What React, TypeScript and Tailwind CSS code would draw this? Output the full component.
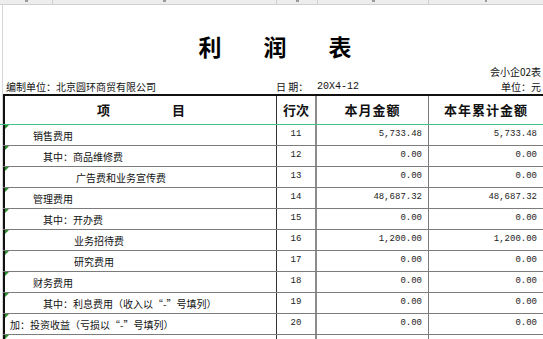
const cjk = "font-['Noto_Sans_CJK_SC',sans-serif]";
const mono = "font-['Liberation_Mono','Noto_Sans_CJK_SC',monospace]";

type Row = { name: string; indent: string; no: string; month: string; year: string };

const rows: Row[] = [
  { name: "销售费用", indent: "pl-[28px]", no: "11", month: "5,733.48", year: "5,733.48" },
  { name: "其中：商品维修费", indent: "pl-[38px]", no: "12", month: "0.00", year: "0.00" },
  { name: "广告费和业务宣传费", indent: "pl-[71px]", no: "13", month: "0.00", year: "0.00" },
  { name: "管理费用", indent: "pl-[28px]", no: "14", month: "48,687.32", year: "48,687.32" },
  { name: "其中：开办费", indent: "pl-[38px]", no: "15", month: "0.00", year: "0.00" },
  { name: "业务招待费", indent: "pl-[69px]", no: "16", month: "1,200.00", year: "1,200.00" },
  { name: "研究费用", indent: "pl-[69px]", no: "17", month: "0.00", year: "0.00" },
  { name: "财务费用", indent: "pl-[28px]", no: "18", month: "0.00", year: "0.00" },
  { name: "其中：利息费用（收入以“-”号填列）", indent: "pl-[38px]", no: "19", month: "0.00", year: "0.00" },
  { name: "加：投资收益（亏损以“-”号填列）", indent: "pl-[5px]", no: "20", month: "0.00", year: "0.00" },
];

function Gutter() {
  return <div className="w-[3px] shrink-0 border-r border-[#d6d6d6] bg-white" />;
}

function DataRow({ r }: { r: Row }) {
  return (
    <div className="flex h-[21px]">
      <Gutter />
      <div className="flex flex-1 border-b border-[#7c7c7c]">
        <div
          className={`relative flex w-[274px] shrink-0 items-center border-l-2 border-r border-l-[#111] border-r-[#333] text-[10px] text-[#111] ${cjk} ${r.indent}`}
        >
          <span className="absolute left-0 top-0 h-0 w-0 border-r-[4px] border-t-[4px] border-r-transparent border-t-[#2f8f2f]" />
          {r.name}
        </div>
        <div className={`flex w-[40px] shrink-0 items-center justify-center border-r-2 border-[#8c8c8c] text-[9px] text-[#222] ${mono}`}>
          {r.no}
        </div>
        <div className={`flex w-[112px] shrink-0 items-center justify-end border-r border-[#7c7c7c] pr-[6px] text-[9px] text-[#222] ${mono}`}>
          {r.month}
        </div>
        <div className={`flex flex-1 items-center justify-end pr-[6px] text-[9px] text-[#222] ${mono}`}>{r.year}</div>
      </div>
    </div>
  );
}

export default function App() {
  return (
    <div className="h-[339px] w-[543px] overflow-hidden bg-white">
      {/* column header strip */}
      <div className="flex h-[5px] border-b border-[#d0d0d0] bg-[#ededed]">
        <div className="flex w-[53px] justify-center border-r border-[#cfcfcf]">
          <span className="h-[2px] w-[3px] bg-[#999]" />
        </div>
        <div className="flex w-[224px] justify-center border-r border-[#cfcfcf]">
          <span className="h-[2px] w-[3px] bg-[#999]" />
        </div>
        <div className="flex w-[41px] justify-center border-r border-[#cfcfcf]">
          <span className="h-[2px] w-[3px] bg-[#999]" />
        </div>
        <div className="flex w-[111px] justify-center border-r border-[#cfcfcf]">
          <span className="h-[2px] w-[3px] bg-[#999]" />
        </div>
        <div className="flex flex-1 justify-center">
          <span className="h-[2px] w-[2px] bg-[#999]" />
        </div>
      </div>

      <div className="flex">
        <Gutter />
        <div className="flex-1">
          <div className={`flex justify-center gap-[42px] pl-[4px] pt-[29px] text-[23px] font-bold leading-[24px] text-black ${cjk}`}>
            <span>利</span>
            <span>润</span>
            <span>表</span>
          </div>
          <div className={`mt-[8px] h-[12px] pr-[2px] text-right text-[10px] leading-[12px] text-[#111] ${cjk}`}>
            会小企02表
          </div>
          <div className={`flex h-[16px] items-end pb-[1px] text-[10px] leading-[12px] text-[#111] ${cjk}`}>
            <span className="w-[273px] pl-[3px]">编制单位：北京圆环商贸有限公司</span>
            <span className="w-[41px]">日 期：</span>
            <span className={mono}>20X4-12</span>
            <span className="ml-auto pr-[2px]">单位：元</span>
          </div>
        </div>
      </div>

      {/* header row */}
      <div className="flex h-[30px]">
        <Gutter />
        <div className={`flex flex-1 border-t-2 border-[#111] text-[13px] font-bold text-[#111] ${cjk}`}>
          <div className="flex w-[274px] shrink-0 items-center border-l-2 border-r border-l-[#111] border-r-[#333] pl-[92px]">
            <span>项</span>
            <span className="ml-[62px]">目</span>
          </div>
          <div className="flex w-[40px] shrink-0 items-center justify-center border-r-2 border-[#8c8c8c]">行次</div>
          <div className="flex w-[112px] shrink-0 items-center justify-center border-r border-[#7c7c7c] tracking-[1px]">
            本月金额
          </div>
          <div className="flex flex-1 items-center justify-center tracking-[1px]">本年累计金额</div>
        </div>
      </div>
      <div className="h-px bg-[#45c08c]" />

      {rows.map((r) => (
        <DataRow key={r.no} r={r} />
      ))}

      <div className="flex h-[21px]">
        <Gutter />
        <div className="flex flex-1">
          <div className="relative w-[274px] shrink-0 border-l-2 border-r border-l-[#111] border-r-[#333]">
            <span className="absolute left-0 top-0 h-0 w-0 border-r-[4px] border-t-[4px] border-r-transparent border-t-[#2f8f2f]" />
          </div>
          <div className="w-[40px] shrink-0 border-r-2 border-[#8c8c8c]" />
          <div className="w-[112px] shrink-0 border-r border-[#7c7c7c]" />
          <div className="flex-1" />
        </div>
      </div>
    </div>
  );
}
